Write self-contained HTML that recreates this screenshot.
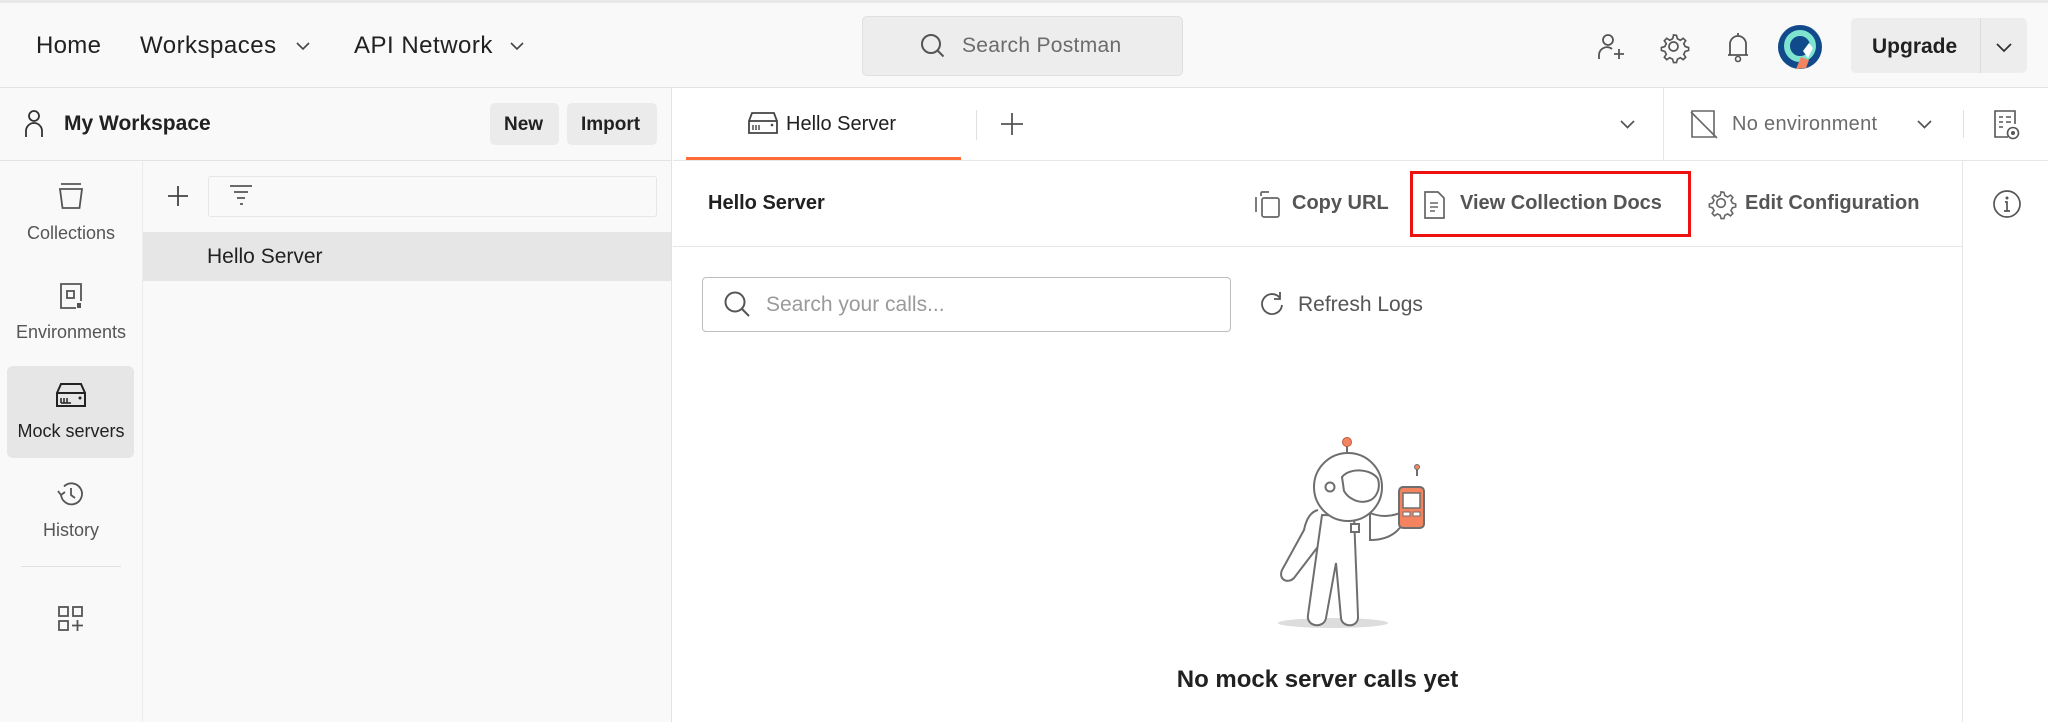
<!DOCTYPE html>
<html><head><meta charset="utf-8">
<style>
*{box-sizing:border-box;margin:0;padding:0}
body{width:2048px;height:722px;overflow:hidden;background:#fff;font-family:"Liberation Sans",sans-serif;color:#212121;position:relative}
.a{position:absolute}
.t{position:absolute;white-space:nowrap;line-height:1}
svg{position:absolute;overflow:visible}
</style></head><body>
<!-- top bar -->
<div class="a" style="left:0;top:0;width:2048px;height:88px;background:#f9f9f9;border-top:3px solid #e9e9e9;border-bottom:1px solid #e3e3e3"></div>
<div class="t" style="left:36px;top:34px;font-size:24px;color:#212121;letter-spacing:0.3px">Home</div>
<div class="t" style="left:140px;top:34px;font-size:24px;letter-spacing:0.5px">Workspaces</div>
<svg style="left:296px;top:42px" width="14" height="8"><path d="M1 1l6 6 6-6" fill="none" stroke="#444" stroke-width="1.6"/></svg>
<div class="t" style="left:354px;top:34px;font-size:24px;letter-spacing:0.5px">API Network</div>
<svg style="left:510px;top:42px" width="14" height="8"><path d="M1 1l6 6 6-6" fill="none" stroke="#444" stroke-width="1.6"/></svg>
<div class="a" style="left:862px;top:16px;width:321px;height:60px;background:#ededed;border:1px solid #e0e0e0;border-radius:5px"></div>
<svg style="left:920px;top:33px" width="26" height="26"><circle cx="11" cy="11" r="9" fill="none" stroke="#555" stroke-width="2"/><path d="M17.5 17.5l6 6" stroke="#555" stroke-width="2"/></svg>
<div class="t" style="left:962px;top:35px;font-size:21px;color:#6b6b6b;letter-spacing:0.3px">Search Postman</div>
<!-- top icons -->
<svg style="left:1597px;top:33px" width="28" height="28"><circle cx="11" cy="7" r="5" fill="none" stroke="#555" stroke-width="1.8"/><path d="M2 26v-4a8 8 0 0 1 13-6M17 21h10M22 16v10" fill="none" stroke="#555" stroke-width="1.8"/></svg>
<svg style="left:1659px;top:32px" width="30" height="30"><path d="M15 3l3 .5 1 3.5 3 1.5 3-2 2.5 2.5-2 3 1.5 3 3.5 1v3l-3.5 1-1.5 3 2 3-2.5 2.5-3-2-3 1.5-1 3.5h-3l-1-3.5-3-1.5-3 2-2.5-2.5 2-3-1.5-3-3.5-1v-3l3.5-1 1.5-3-2-3 2.5-2.5 3 2 3-1.5 1-3.5z" transform="scale(.97)" fill="none" stroke="#555" stroke-width="1.7"/><circle cx="14.5" cy="14.5" r="4.5" fill="none" stroke="#555" stroke-width="1.7"/></svg>
<svg style="left:1725px;top:31px" width="26" height="32"><path d="M13 2v3M5 24V13a8 8 0 0 1 16 0v11zM3 24h20" fill="none" stroke="#555" stroke-width="1.8"/><circle cx="13" cy="28" r="2.5" fill="none" stroke="#555" stroke-width="1.6"/></svg>
<svg style="left:1778px;top:25px" width="44" height="44"><circle cx="22" cy="22" r="22" fill="#114a8b"/><circle cx="22" cy="21" r="13" fill="none" stroke="#7ee3cf" stroke-width="6"/><ellipse cx="24" cy="20" rx="7" ry="6" fill="#114a8b"/><path d="M25 26l6-8 4 5-5 10z" fill="#fff"/><path d="M18 44l5-12 8 3-3 8z" fill="#f4845f"/></svg>
<div class="a" style="left:1851px;top:18px;width:176px;height:55px;background:#ededed;border-radius:5px"></div>
<div class="a" style="left:1980px;top:18px;width:1px;height:55px;background:#dcdcdc"></div>
<div class="t" style="left:1872px;top:36px;font-size:21px;font-weight:bold;color:#212121">Upgrade</div>
<svg style="left:1996px;top:43px" width="16" height="9"><path d="M1 1l7 7 7-7" fill="none" stroke="#333" stroke-width="1.8"/></svg>

<!-- left icon column -->
<div class="a" style="left:0;top:88px;width:672px;height:634px;background:#f9f9f9;border-right:1px solid #e3e3e3"></div>
<div class="a" style="left:0;top:160px;width:672px;height:1px;background:#e3e3e3"></div>
<div class="a" style="left:142px;top:161px;width:1px;height:561px;background:#ececec"></div>
<svg style="left:24px;top:110px" width="20" height="28"><circle cx="10" cy="6" r="5" fill="none" stroke="#333" stroke-width="1.8"/><path d="M2 27v-6a8 8 0 0 1 16 0v6" fill="none" stroke="#333" stroke-width="1.8"/></svg>
<div class="t" style="left:64px;top:113px;font-size:21px;font-weight:bold">My Workspace</div>
<div class="a" style="left:490px;top:103px;width:69px;height:42px;background:#ebebeb;border-radius:5px"></div>
<div class="t" style="left:504px;top:115px;font-size:19px;font-weight:bold">New</div>
<div class="a" style="left:567px;top:103px;width:90px;height:42px;background:#ebebeb;border-radius:5px"></div>
<div class="t" style="left:581px;top:115px;font-size:19px;font-weight:bold">Import</div>

<svg style="left:59px;top:183px" width="24" height="26"><path d="M2 1h20M1 6h22l-2.5 19h-17z" fill="none" stroke="#555" stroke-width="1.8"/></svg>
<div class="t" style="left:0;width:142px;text-align:center;top:224px;font-size:18px;color:#555">Collections</div>
<svg style="left:60px;top:283px" width="22" height="26"><path d="M16 25H1V1h20v17" fill="none" stroke="#555" stroke-width="1.8"/><rect x="7" y="8" width="7" height="7" fill="none" stroke="#555" stroke-width="1.8"/><rect x="17" y="20" width="4" height="5" fill="#555"/></svg>
<div class="t" style="left:0;width:142px;text-align:center;top:323px;font-size:18px;color:#555">Environments</div>
<div class="a" style="left:7px;top:366px;width:127px;height:92px;background:#e6e6e6;border-radius:6px"></div>
<svg style="left:56px;top:383px" width="30" height="24"><path d="M1 10L5 1h20l4 9v13H1zM1 10h28" fill="none" stroke="#222" stroke-width="2"/><path d="M5 15v5M8 15v5M11 15v5M5 20h10" stroke="#222" stroke-width="1.5"/><circle cx="24" cy="15" r="1.5" fill="#222"/></svg>
<div class="t" style="left:0;width:142px;text-align:center;top:422px;font-size:18px;color:#212121">Mock servers</div>
<svg style="left:57px;top:480px" width="28" height="28"><path d="M4 14A10.5 10.5 0 1 0 7 6.5" fill="none" stroke="#555" stroke-width="1.8"/><path d="M1 11l3 4 4-3" fill="none" stroke="#555" stroke-width="1.8"/><path d="M14 8v7l4 3" fill="none" stroke="#555" stroke-width="1.8"/></svg>
<div class="t" style="left:0;width:142px;text-align:center;top:521px;font-size:18px;color:#555">History</div>
<div class="a" style="left:21px;top:566px;width:100px;height:1px;background:#e0e0e0"></div>
<svg style="left:58px;top:606px" width="26" height="26"><rect x="1" y="1" width="9" height="9" fill="none" stroke="#555" stroke-width="1.8"/><rect x="15" y="1" width="9" height="9" fill="none" stroke="#555" stroke-width="1.8"/><rect x="1" y="15" width="9" height="9" fill="none" stroke="#555" stroke-width="1.8"/><path d="M19.5 14v11M14 19.5h11" stroke="#555" stroke-width="1.8"/></svg>

<!-- sidebar list -->
<svg style="left:168px;top:186px" width="20" height="20"><path d="M10 0v20M0 10h20" stroke="#444" stroke-width="1.8"/></svg>
<div class="a" style="left:208px;top:176px;width:449px;height:41px;border:1px solid #e6e6e6;border-radius:3px;background:#f9f9f9"></div>
<svg style="left:228px;top:184px" width="28" height="24"><path d="M2 2h22M6 8h14M9 14h8M12 20h3" stroke="#555" stroke-width="1.8"/></svg>
<div class="a" style="left:143px;top:232px;width:528px;height:49px;background:#e6e6e6"></div>
<div class="t" style="left:207px;top:246px;font-size:21px;color:#212121">Hello Server</div>

<!-- tab row -->
<div class="a" style="left:673px;top:88px;width:1375px;height:73px;background:#fff;border-bottom:1px solid #e6e6e6"></div>
<svg style="left:748px;top:112px" width="30" height="22"><path d="M1 9L4 1h22l3 8v12H1zM1 9h28" fill="none" stroke="#444" stroke-width="1.8"/><path d="M5 13v5M8 13v5M11 13v5" stroke="#444" stroke-width="1.4"/><circle cx="24" cy="13" r="1.3" fill="#444"/></svg>
<div class="t" style="left:786px;top:114px;font-size:20px">Hello Server</div>
<div class="a" style="left:686px;top:157px;width:275px;height:3px;background:#ff6c37"></div>
<div class="a" style="left:976px;top:110px;width:1px;height:30px;background:#e0e0e0"></div>
<svg style="left:1001px;top:113px" width="22" height="22"><path d="M11 0v22M0 11h22" stroke="#555" stroke-width="1.8"/></svg>
<svg style="left:1620px;top:120px" width="15" height="9"><path d="M1 1l6.5 6.5 6.5-6.5" fill="none" stroke="#555" stroke-width="1.7"/></svg>
<div class="a" style="left:1663px;top:88px;width:1px;height:72px;background:#e6e6e6"></div>
<svg style="left:1691px;top:110px" width="26" height="28"><path d="M1 1h22v26H1z" fill="none" stroke="#666" stroke-width="1.6"/><path d="M0 2l26 26" stroke="#666" stroke-width="1.6"/></svg>
<div class="t" style="left:1732px;top:114px;font-size:20px;color:#6b6b6b;letter-spacing:0.3px">No environment</div>
<svg style="left:1917px;top:120px" width="15" height="9"><path d="M1 1l6.5 6.5 6.5-6.5" fill="none" stroke="#555" stroke-width="1.7"/></svg>
<div class="a" style="left:1963px;top:110px;width:1px;height:28px;background:#e0e0e0"></div>
<svg style="left:1994px;top:110px" width="26" height="30"><path d="M14 27H1V1h20v13" fill="none" stroke="#555" stroke-width="1.6"/><path d="M5 7h4M12 7h5M5 12h4M12 12h5M5 17h4" stroke="#555" stroke-width="1.6"/><circle cx="19" cy="23" r="5.5" fill="#fff" stroke="#555" stroke-width="1.6"/><circle cx="19" cy="23" r="2" fill="#555"/></svg>

<!-- right sidebar line -->
<div class="a" style="left:1962px;top:161px;width:1px;height:561px;background:#e6e6e6"></div>
<svg style="left:1993px;top:190px" width="28" height="28"><circle cx="14" cy="14" r="13" fill="none" stroke="#555" stroke-width="1.7"/><circle cx="14" cy="8" r="1.5" fill="#555"/><path d="M12 12h2v9M11 21h6" fill="none" stroke="#555" stroke-width="1.7"/></svg>

<!-- header row -->
<div class="t" style="left:708px;top:193px;font-size:20px;font-weight:bold">Hello Server</div>
<div class="a" style="left:673px;top:246px;width:1289px;height:1px;background:#e6e6e6"></div>
<svg style="left:1255px;top:191px" width="26" height="27"><path d="M6 5V2a1 1 0 0 1 1-1h7M1 6v15" fill="none" stroke="#666" stroke-width="1.7"/><rect x="7" y="7" width="17" height="19" rx="2" fill="none" stroke="#666" stroke-width="1.7"/></svg>
<div class="t" style="left:1292px;top:193px;font-size:20px;font-weight:bold;color:#555">Copy URL</div>
<div class="a" style="left:1410px;top:171px;width:281px;height:66px;border:3px solid #ee1111"></div>
<svg style="left:1424px;top:191px" width="22" height="28"><path d="M1 1h13l6 6v20H1z" fill="none" stroke="#666" stroke-width="1.7"/><path d="M6 12h8M6 16h8M6 20h5" stroke="#666" stroke-width="1.6"/></svg>
<div class="t" style="left:1460px;top:193px;font-size:20px;font-weight:bold;color:#555">View Collection Docs</div>
<svg style="left:1707px;top:189px" width="29" height="29"><path d="M15 3l3 .5 1 3.5 3 1.5 3-2 2.5 2.5-2 3 1.5 3 3.5 1v3l-3.5 1-1.5 3 2 3-2.5 2.5-3-2-3 1.5-1 3.5h-3l-1-3.5-3-1.5-3 2-2.5-2.5 2-3-1.5-3-3.5-1v-3l3.5-1 1.5-3-2-3 2.5-2.5 3 2 3-1.5 1-3.5z" transform="scale(.94)" fill="none" stroke="#666" stroke-width="1.7"/><circle cx="14" cy="14" r="4.3" fill="none" stroke="#666" stroke-width="1.7"/></svg>
<div class="t" style="left:1745px;top:193px;font-size:20px;font-weight:bold;color:#555">Edit Configuration</div>

<!-- search row -->
<div class="a" style="left:702px;top:277px;width:529px;height:55px;border:1px solid #bdbdbd;border-radius:4px;background:#fff"></div>
<svg style="left:724px;top:291px" width="28" height="28"><circle cx="11" cy="11" r="9.5" fill="none" stroke="#555" stroke-width="2"/><path d="M18 18l7 7" stroke="#555" stroke-width="2"/></svg>
<div class="t" style="left:766px;top:294px;font-size:21px;color:#9a9a9a">Search your calls...</div>
<svg style="left:1260px;top:292px" width="24" height="26"><path d="M20 6A10 10 0 1 0 22 13" fill="none" stroke="#555" stroke-width="1.8"/><path d="M20 0v7h-6" fill="none" stroke="#555" stroke-width="1.8"/></svg>
<div class="t" style="left:1298px;top:294px;font-size:21px;color:#555">Refresh Logs</div>

<!-- astronaut -->
<svg style="left:1270px;top:432px" width="160" height="200" viewBox="1270 432 160 200">
<ellipse cx="1333" cy="623" rx="55" ry="5" fill="#ddd"/>
<path d="M1318 510c-8 2-12 10-14 20l-22 40c-4 10 6 14 12 8l26-34" fill="#fff" stroke="#6e6e6e" stroke-width="2"/>
<path d="M1322 515l-14 100c-2 12 16 14 18 3l10-55 5 55c1 10 18 10 17-2l-4-100z" fill="#fff" stroke="#6e6e6e" stroke-width="2"/>
<path d="M1370 513c10 4 20 4 30 0l2 12c-8 12-20 15-32 15z" fill="#fff" stroke="#6e6e6e" stroke-width="2"/>
<circle cx="1348" cy="487" r="34" fill="#fff" stroke="#6e6e6e" stroke-width="2"/>
<path d="M1342 477c8-10 30-8 36 2 3 10-2 20-10 22-10 3-20-3-24-10z" fill="#fff" stroke="#6e6e6e" stroke-width="2"/>
<circle cx="1330" cy="487" r="4.5" fill="#fff" stroke="#6e6e6e" stroke-width="2"/>
<rect x="1351" y="524" width="8" height="8" fill="#fff" stroke="#6e6e6e" stroke-width="2"/>
<path d="M1347 452v-8" stroke="#6e6e6e" stroke-width="2"/>
<circle cx="1347" cy="442" r="4.5" fill="#f4845f" stroke="#c05a3a" stroke-width="1"/>
<path d="M1417 476v-8" stroke="#6e6e6e" stroke-width="2"/>
<circle cx="1417" cy="467" r="2.5" fill="#f4845f" stroke="#6e6e6e" stroke-width="1"/>
<rect x="1399" y="487" width="25" height="41" rx="4" fill="#f4845f" stroke="#6e6e6e" stroke-width="2"/>
<rect x="1403" y="493" width="17" height="15" fill="#fff" stroke="#6e6e6e" stroke-width="1.5"/>
<rect x="1403" y="512" width="7" height="4" fill="#fff" stroke="#6e6e6e" stroke-width="1"/>
<rect x="1413" y="512" width="7" height="4" fill="#fff" stroke="#6e6e6e" stroke-width="1"/>
</svg>
<div class="t" style="left:673px;width:1289px;text-align:center;top:668px;font-size:24px;font-weight:bold;color:#212121">No mock server calls yet</div>
</body></html>
